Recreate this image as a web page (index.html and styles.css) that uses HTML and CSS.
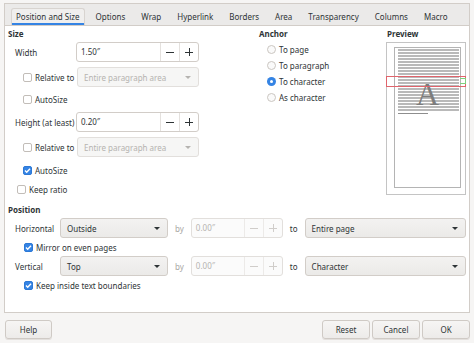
FILE: index.html
```html
<!DOCTYPE html>
<html>
<head>
<meta charset="utf-8">
<title>Position and Size</title>
<link rel="stylesheet" href="styles.css">
</head>
<body>
<div class="dialog">
<div class="notebook">
	<div class="tabs">
		<span class="tab active">Position and Size</span>
		<span class="tab">Options</span>
		<span class="tab">Wrap</span>
		<span class="tab">Hyperlink</span>
		<span class="tab">Borders</span>
		<span class="tab">Area</span>
		<span class="tab">Transparency</span>
		<span class="tab">Columns</span>
		<span class="tab">Macro</span>
	</div>
	<div class="page">
		<div class="top">
			<div class="size">
				<div class="heading">Size</div>
				<div class="row field">
					<span class="label">Width</span>
					<div class="spin">
						<span class="value">1.50″</span>
						<span class="sbtn"><svg width="8" height="8"><path d="M0 4.5h8" stroke="currentColor"/></svg></span>
						<span class="sbtn"><svg width="8" height="8"><path d="M0 4.5h8M4.5 0v8" stroke="currentColor"/></svg></span>
					</div>
				</div>
				<div class="row field sub">
					<span class="check"></span><span class="clabel">Relative to</span>
					<div class="combo disabled"><span>Entire paragraph area</span><span class="arrow"></span></div>
				</div>
				<div class="row check-row sub">
					<span class="check"></span><span class="clabel">AutoSize</span>
				</div>
				<div class="row field wide">
					<span class="label">Height (at least)</span>
					<div class="spin">
						<span class="value">0.20″</span>
						<span class="sbtn"><svg width="8" height="8"><path d="M0 4.5h8" stroke="currentColor"/></svg></span>
						<span class="sbtn"><svg width="8" height="8"><path d="M0 4.5h8M4.5 0v8" stroke="currentColor"/></svg></span>
					</div>
				</div>
				<div class="row field sub">
					<span class="check"></span><span class="clabel">Relative to</span>
					<div class="combo disabled"><span>Entire paragraph area</span><span class="arrow"></span></div>
				</div>
				<div class="row check-row sub wide">
					<span class="check on"><svg width="7" height="7" viewBox="0 0 7 7"><path d="M1 3.6l1.7 1.7L6 1.8" fill="none" stroke="#fff" stroke-width="1.4"/></svg></span><span class="clabel">AutoSize</span>
				</div>
				<div class="row check-row ratio">
					<span class="check"></span><span class="clabel">Keep ratio</span>
				</div>
			</div>
			<div class="anchor">
				<div class="heading">Anchor</div>
				<div class="radio-row"><span class="radio"></span>To page</div>
				<div class="radio-row"><span class="radio"></span>To paragraph</div>
				<div class="radio-row"><span class="radio on"></span>To character</div>
				<div class="radio-row"><span class="radio"></span>As character</div>
			</div>
			<div class="preview">
				<div class="heading">Preview</div>
				<div class="pbox">
					<div class="ppage">
						<div class="plines"></div>
						<div class="pshort"></div>
					</div>
					<span class="pglyph">A</span>
					<div class="pframe"><div class="pmark"></div></div>
				</div>
			</div>
		</div>
		<div class="position">
			<div class="heading">Position</div>
			<div class="row prow">
				<span class="plabel">Horizontal</span>
				<div class="combo pcombo"><span>Outside</span><span class="arrow"></span></div>
				<span class="muted">by</span>
				<div class="spin pspin disabled">
					<span class="value">0.00″</span>
					<span class="sbtn"><svg width="8" height="8"><path d="M0 4.5h8" stroke="currentColor"/></svg></span>
					<span class="sbtn"><svg width="8" height="8"><path d="M0 4.5h8M4.5 0v8" stroke="currentColor"/></svg></span>
				</div>
				<span>to</span>
				<div class="combo grow"><span>Entire page</span><span class="arrow"></span></div>
			</div>
			<div class="row check-row psub">
				<span class="check on"><svg width="7" height="7" viewBox="0 0 7 7"><path d="M1 3.6l1.7 1.7L6 1.8" fill="none" stroke="#fff" stroke-width="1.4"/></svg></span><span class="clabel">Mirror on even pages</span>
			</div>
			<div class="row prow">
				<span class="plabel">Vertical</span>
				<div class="combo pcombo"><span>Top</span><span class="arrow"></span></div>
				<span class="muted">by</span>
				<div class="spin pspin disabled">
					<span class="value">0.00″</span>
					<span class="sbtn"><svg width="8" height="8"><path d="M0 4.5h8" stroke="currentColor"/></svg></span>
					<span class="sbtn"><svg width="8" height="8"><path d="M0 4.5h8M4.5 0v8" stroke="currentColor"/></svg></span>
				</div>
				<span>to</span>
				<div class="combo grow"><span>Character</span><span class="arrow"></span></div>
			</div>
			<div class="row check-row psub">
				<span class="check on"><svg width="7" height="7" viewBox="0 0 7 7"><path d="M1 3.6l1.7 1.7L6 1.8" fill="none" stroke="#fff" stroke-width="1.4"/></svg></span><span class="clabel">Keep inside text boundaries</span>
			</div>
		</div>
	</div>
</div>
<div class="buttons">
	<span class="button help">Help</span>
	<span class="spacer"></span>
	<span class="button">Reset</span>
	<span class="button">Cancel</span>
	<span class="button">OK</span>
</div>
</div>
</body>
</html>
```
FILE: styles.css
```css
body
{
	margin: 0;
	width: 474px;
	height: 343px;
	overflow: hidden;
	background-color: #f6f5f4;
	font-family: "Noto Sans", sans-serif;
	font-size: 8px;
	color: #2e3436;
}
.dialog
{
	padding-top: 3px;
}
.notebook
{
	margin-left: 4px;
	width: 466px;
	box-sizing: border-box;
	border: 1px solid #d2cdc8;
}
.tabs
{
	display: flex;
	align-items: flex-end;
	height: 22px;
	box-sizing: border-box;
	padding-left: 6px;
	background-color: #ebeae9;
	border-bottom: 1px solid #d2cdc8;
}
.tab
{
	height: 17px;
	line-height: 16px;
	box-sizing: border-box;
	padding: 0 4px;
	margin-right: 6px;
	border: 1px solid transparent;
	border-bottom: none;
	white-space: nowrap;
}
.tab.active
{
	background-color: #f0efee;
	border-color: #d8d4d0;
	border-radius: 3px 3px 0 0;
	box-shadow: inset 0 -2px #3584e4;
}
.page
{
	height: 286px;
	box-sizing: border-box;
	padding: 0 3px;
	background-color: #fff;
}
.top
{
	display: grid;
	grid-template-columns: 250px 128px 80px;
	height: 176px;
}
.heading
{
	height: 16px;
	line-height: 16px;
	font-weight: bold;
}
.size
{
	display: flex;
	flex-direction: column;
	gap: 5px;
}
.size .heading
{
	margin-bottom: -5px;
}
.row
{
	display: flex;
	align-items: center;
	box-sizing: border-box;
	white-space: nowrap;
}
.size .row
{
	width: 191px;
}
.field
{
	height: 20px;
	padding-left: 7px;
}
.check-row
{
	height: 14px;
}
.sub
{
	padding-left: 15px;
}
.wide
{
	margin-top: 1px;
}
.ratio
{
	padding-left: 9px;
}
.label
{
	flex: none;
}
.check
{
	flex: none;
	display: flex;
	align-items: center;
	justify-content: center;
	width: 9px;
	height: 9px;
	box-sizing: border-box;
	margin-right: 3px;
	border: 1px solid #c2bdb8;
	border-radius: 2px;
	background-color: #fff;
}
.check.on
{
	border-color: #2c78d6;
	background-color: #3584e4;
}
.spin
{
	display: flex;
	align-items: stretch;
	width: 123px;
	height: 20px;
	box-sizing: border-box;
	margin-left: auto;
	border: 1px solid #d2cdc8;
	border-radius: 3px;
	background-color: #fff;
}
.spin .value
{
	flex: 1;
	padding-left: 4px;
	line-height: 18px;
}
.sbtn
{
	display: flex;
	align-items: center;
	justify-content: center;
	width: 18px;
	border-left: 1px solid #e4e1de;
	color: #2e3436;
}
.spin.disabled
{
	background-color: #fbfbfb;
	border-color: #e2dfdc;
	color: #b5b3b0;
}
.spin.disabled .sbtn
{
	color: #d0cdca;
	border-left-color: #eceae8;
}
.combo
{
	display: flex;
	align-items: center;
	width: 122px;
	height: 20px;
	box-sizing: border-box;
	margin-left: auto;
	padding-left: 6px;
	border: 1px solid #d2cdc8;
	border-radius: 3px;
	background: linear-gradient(#f3f2f1, #ebeae8);
}
.combo.disabled
{
	background: #f6f6f5;
	border-color: #e2dfdc;
	color: #b5b3b0;
}
.arrow
{
	margin-left: auto;
	margin-right: 7px;
	border-left: 3px solid transparent;
	border-right: 3px solid transparent;
	border-top: 3px solid #2e3436;
}
.combo.disabled .arrow
{
	border-top-color: #b5b3b0;
}
.anchor .heading
{
	padding-left: 1px;
	margin-bottom: -1px;
}
.radio-row
{
	display: flex;
	align-items: center;
	height: 16px;
	padding-left: 9px;
}
.radio
{
	display: flex;
	align-items: center;
	justify-content: center;
	width: 9px;
	height: 9px;
	box-sizing: border-box;
	margin-right: 3px;
	border: 1px solid #cbc6c1;
	border-radius: 50%;
	background-color: #fafafa;
}
.radio.on
{
	border: none;
	background-color: #3584e4;
}
.radio.on::after
{
	content: "";
	width: 3px;
	height: 3px;
	border-radius: 50%;
	background-color: #fff;
}
.preview .heading
{
	padding-left: 1px;
}
.pbox
{
	position: relative;
	width: 80px;
	height: 153px;
	box-sizing: border-box;
	border: 1px solid #c4c4c4;
	background-color: #fff;
}
.ppage
{
	width: 67px;
	height: 141px;
	box-sizing: border-box;
	margin: 4px 0 0 7px;
	border: 1px solid #b4b4b4;
}
.plines
{
	width: 61px;
	height: 63px;
	margin: 1px 0 0 3px;
	background: repeating-linear-gradient(#b9b9b9 0 2px, #fff 2px 3px);
}
.pshort
{
	width: 30px;
	height: 1px;
	margin: 1px 0 0 3px;
	background-color: #8e8e8e;
}
.pglyph
{
	position: absolute;
	left: 29px;
	top: 35px;
	font-family: "Liberation Serif", serif;
	font-size: 32px;
	line-height: 1;
	color: #7d7d7d;
}
.pframe
{
	position: absolute;
	left: -1px;
	top: 33px;
	width: 80px;
	height: 11px;
	box-sizing: border-box;
	border: 1px solid #e0646c;
}
.pmark
{
	position: absolute;
	right: -1px;
	top: 1px;
	width: 6px;
	height: 6px;
	box-sizing: border-box;
	border: 1px solid #7ed17e;
	border-left: none;
}
.position
{
	display: flex;
	flex-direction: column;
	gap: 2px;
}
.position .heading
{
	margin-bottom: -2px;
}
.prow
{
	gap: 7px;
	height: 20px;
	padding-left: 7px;
}
.plabel
{
	width: 38px;
}
.pcombo
{
	width: 108px;
	margin-left: 0;
}
.pspin
{
	width: 92px;
	margin-left: 0;
}
.combo.grow
{
	flex: 1;
	width: auto;
	margin-left: 0;
}
.muted
{
	color: #a9a7a4;
}
.psub
{
	padding-left: 16px;
}
.buttons
{
	display: flex;
	gap: 2px;
	padding: 7px 4px 0 5px;
}
.spacer
{
	flex: 1;
}
.button
{
	width: 48px;
	height: 19px;
	box-sizing: border-box;
	line-height: 17px;
	text-align: center;
	border: 1px solid #cfcac5;
	border-radius: 3px;
	background: linear-gradient(#f6f5f4, #edebe9);
	box-shadow: 0 1px #e3e0dd;
}
.button.help
{
	width: 47px;
}
```
